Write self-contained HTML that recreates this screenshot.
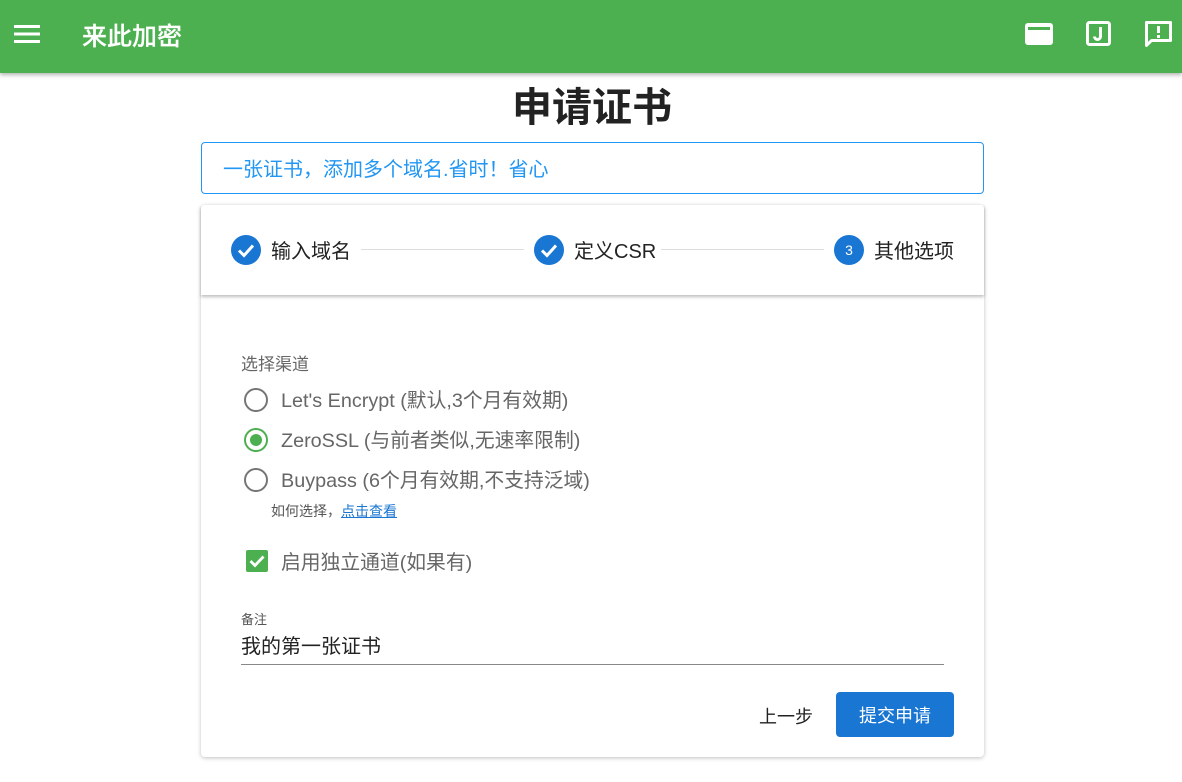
<!DOCTYPE html>
<html><head><meta charset="utf-8"><style>
*{box-sizing:border-box;margin:0;padding:0}
body{width:1182px;height:782px;overflow:hidden;background:#fff;font-family:"Liberation Sans","Noto Sans CJK SC",sans-serif;position:relative;color:#222}
.hdr{position:absolute;left:0;top:0;width:1182px;height:73px;background:#4caf50;box-shadow:0 2px 4px rgba(0,0,0,.3);z-index:2}
.hdr .t{position:absolute;left:82px;top:17px;font-size:25px;color:#fff;font-weight:500;-webkit-text-stroke:0.2px #fff}
.abs{position:absolute}
h1{position:absolute;left:0;width:1184px;text-align:center;top:75px;font-size:40px;font-weight:bold;color:#222}
.alert{position:absolute;left:201px;top:142px;width:783px;height:52px;border:1px solid #2196f3;border-radius:4px;color:#2196f3;font-size:20px;padding:10px 0 0 21px}
.card{position:absolute;left:201px;top:205px;width:783px;height:552px;border-radius:4px;box-shadow:0 1px 4px rgba(0,0,0,.25);background:#fff}
.step{position:absolute;left:0;top:0;width:783px;height:90px;box-shadow:0 2px 3px rgba(0,0,0,.25)}
.circ{position:absolute;width:30px;height:30px;border-radius:50%;background:#1976d2;top:30px;color:#fff;font-size:14px;text-align:center;line-height:30px}
.sl{position:absolute;top:30px;font-size:20px;color:#222}
.line{position:absolute;top:44px;height:1px;background:#ddd}
.g{color:#666;font-size:19.8px}
.radio{position:absolute;width:24px;height:24px;border-radius:50%;border:2px solid #757575}
</style></head><body>
<div class="hdr">
<svg class="abs" style="left:14px;top:24px" width="26" height="20" viewBox="0 0 26 20"><rect y="1" width="26" height="3" fill="#fff"/><rect y="8.5" width="26" height="3" fill="#fff"/><rect y="16" width="26" height="3" fill="#fff"/></svg>
<div class="t">来此加密</div>
<svg class="abs" style="left:1025px;top:23px" width="28" height="22" viewBox="0 0 28 22"><rect x="0" y="0" width="28" height="22" rx="3" fill="#fff"/><rect x="3" y="4" width="22" height="3" fill="#4caf50"/></svg>
<svg class="abs" style="left:1086px;top:21px" width="25" height="25" viewBox="0 0 25 25"><rect x="1.5" y="1.5" width="22" height="22" rx="2" fill="none" stroke="#fff" stroke-width="3"/><path d="M14.5 6v9.5a3 3 0 0 1-6 0" fill="none" stroke="#fff" stroke-width="3"/></svg>
<svg class="abs" style="left:1145px;top:21px" width="27" height="27" viewBox="0 0 27 27"><path d="M1.5 1.5h24v18h-19l-5 5z" fill="none" stroke="#fff" stroke-width="3" stroke-linejoin="round"/><rect x="12" y="5" width="3" height="7" fill="#fff"/><rect x="12" y="14" width="3" height="3" fill="#fff"/></svg>
</div>
<h1>申请证书</h1>
<div class="alert">一张证书，添加多个域名.省时！省心</div>
<div class="card">
<div class="step">
<div class="circ" style="left:30px"><svg width="30" height="30" viewBox="0 0 30 30"><path d="M8 15.5l5 5 9-10" fill="none" stroke="#fff" stroke-width="3"/></svg></div>
<div class="sl" style="left:70px">输入域名</div>
<div class="line" style="left:160px;width:163px"></div>
<div class="circ" style="left:333px"><svg width="30" height="30" viewBox="0 0 30 30"><path d="M8 15.5l5 5 9-10" fill="none" stroke="#fff" stroke-width="3"/></svg></div>
<div class="sl" style="left:373px">定义CSR</div>
<div class="line" style="left:460px;width:163px"></div>
<div class="circ" style="left:633px">3</div>
<div class="sl" style="left:673px">其他选项</div>
</div>
<div class="abs g" style="left:40px;top:145px;font-size:17px">选择渠道</div>
<div class="radio" style="left:43px;top:183px"></div>
<div class="abs g" style="left:80px;top:179px">Let's Encrypt (默认,3个月有效期)</div>
<div class="radio" style="left:43px;top:223px;border-color:#4caf50"><div style="position:absolute;left:4px;top:4px;width:12px;height:12px;border-radius:50%;background:#4caf50"></div></div>
<div class="abs g" style="left:80px;top:219px">ZeroSSL (与前者类似,无速率限制)</div>
<div class="radio" style="left:43px;top:263px"></div>
<div class="abs g" style="left:80px;top:259px">Buypass (6个月有效期,不支持泛域)</div>
<div class="abs" style="left:70px;top:296px;font-size:14px;color:#555">如何选择，<span style="color:#1976d2;text-decoration:underline">点击查看</span></div>
<div class="abs" style="left:45px;top:345px;width:22px;height:22px;background:#4caf50;border-radius:2px"><svg width="22" height="22" viewBox="0 0 22 22"><path d="M4.5 11l4.5 4.5 8.5-9" fill="none" stroke="#fff" stroke-width="2.8"/></svg></div>
<div class="abs g" style="left:80px;top:341px">启用独立通道(如果有)</div>
<div class="abs" style="left:40px;top:404px;font-size:13px;color:#555">备注</div>
<div class="abs" style="left:40px;top:425px;font-size:20px;color:#222">我的第一张证书</div>
<div class="abs" style="left:40px;top:459px;width:703px;height:1px;background:#888"></div>
<div class="abs" style="left:558px;top:498px;font-size:18px;color:#222">上一步</div>
<div class="abs" style="left:635px;top:487px;width:118px;height:45px;background:#1976d2;border-radius:4px;color:#fff;font-size:18px;text-align:center;line-height:48px">提交申请</div>
</div>
</body></html>
